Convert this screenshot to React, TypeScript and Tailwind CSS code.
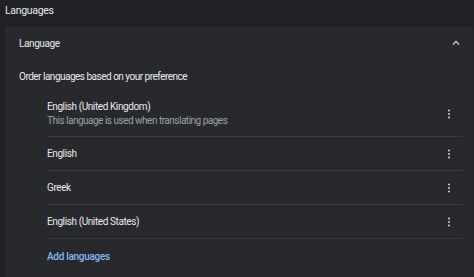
import React from "react";

const Kebab = () => (
  <svg width="12" height="12" viewBox="0 0 24 24" fill="#c4c7c5">
    <circle cx="12" cy="5" r="2.2" />
    <circle cx="12" cy="12" r="2.2" />
    <circle cx="12" cy="19" r="2.2" />
  </svg>
);

const Row = ({ title, sub }: { title: string; sub?: string }) => (
  <div className={`flex items-center justify-between pr-[8px] border-b border-[#3a3b3e] ${sub ? "h-[45px]" : "h-[34px]"}`}>
    <div className="flex flex-col">
      <span className="text-[10px] tracking-[-0.04em] text-[#e8eaed] leading-[14px]">{title}</span>
      {sub && <span className="text-[10px] tracking-[-0.05em] text-[#9aa0a6] leading-[14px]">{sub}</span>}
    </div>
    <Kebab />
  </div>
);

export default function App() {
  return (
    <div className="w-[474px] h-[277px] bg-[#202124] overflow-hidden" style={{ fontFamily: "Roboto, 'Liberation Sans', sans-serif" }}>
      <div className="h-[26px] flex items-center pl-[5px] pb-[8px] pt-[3px]">
        <span className="text-[10.5px] tracking-[-0.03em] text-[#e8eaed]">Languages</span>
      </div>
      <div className="ml-[5px] mr-[1px] h-[251px] bg-[#28292c]">
        <div className="h-[34px] flex items-center justify-between pl-[14px] pr-[11px]">
          <span className="text-[10px] tracking-[-0.04em] text-[#e8eaed]">Language</span>
          <svg width="12" height="12" viewBox="0 0 24 24" fill="none" stroke="#c4c7c5" strokeWidth="3">
            <path d="M6 15l6-6 6 6" />
          </svg>
        </div>
        <div className="h-[32px] flex items-center pl-[14px]">
          <span className="text-[10px] tracking-[-0.05em] text-[#e8eaed]">Order languages based on your preference</span>
        </div>
        <div className="ml-[42px] mr-[10px]">
          <Row title="English (United Kingdom)" sub="This language is used when translating pages" />
          <Row title="English" />
          <Row title="Greek" />
          <Row title="English (United States)" />
          <div className="h-[34px] flex items-center">
            <span className="text-[10px] tracking-[-0.03em] font-medium text-[#8ab4f8]">Add languages</span>
          </div>
        </div>
      </div>
    </div>
  );
}
